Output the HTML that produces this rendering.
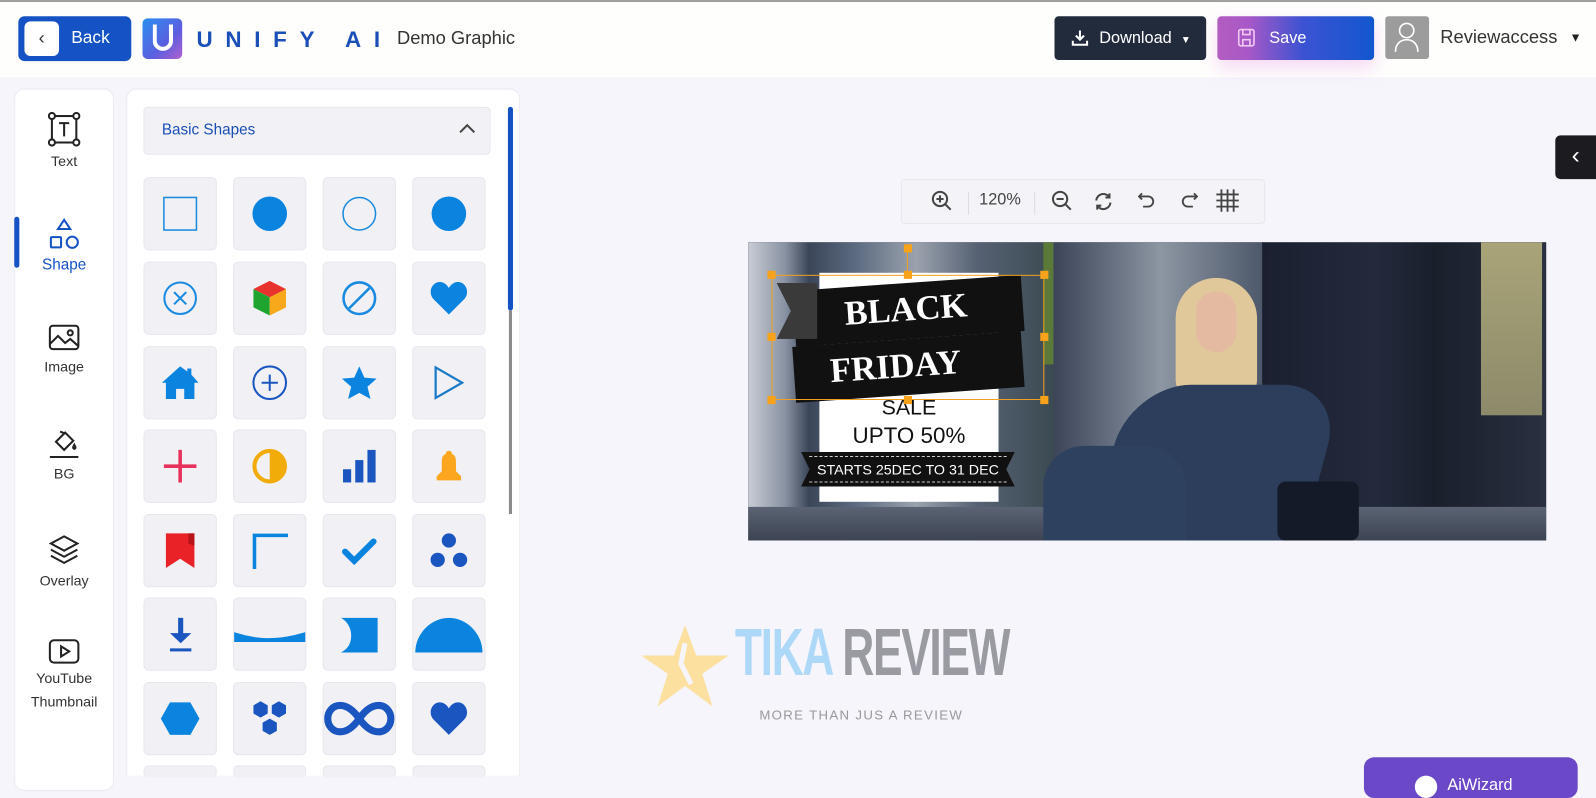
<!DOCTYPE html>
<html><head><meta charset="utf-8"><style>
*{box-sizing:border-box;margin:0;padding:0}
html,body{width:1596px;height:790px;overflow:hidden;background:#f5f5fb;font-family:"Liberation Sans",Arial,sans-serif}
#w{position:absolute;left:0;top:0;width:1568px;height:776px;transform:scale(1.01786);transform-origin:0 0}
.a{position:absolute}
.hdr{left:0;top:0;width:1568px;height:76px;background:#fefefc;border-top:2px solid #a0a0a0}
.cell{position:absolute;width:72px;height:72px;background:#f1f1f5;border:1px solid #e6e6ee;border-radius:5px;display:flex;align-items:center;justify-content:center}
.nav{position:absolute;left:0;width:98px;text-align:center;font-size:14px;color:#333}
.nav svg{display:block;margin:0 auto 6px}
</style></head><body><div id="w">
<div class="a hdr"></div>
<div class="a" style="left:18px;top:16px;width:111px;height:44px;background:#1552c4;border-radius:6px"></div>
<div class="a" style="left:24px;top:21px;width:34px;height:34px;background:#fff;border-radius:6px;font-size:18px;color:#333;text-align:center;line-height:32px">&#8249;</div>
<div class="a" style="left:70px;top:27px;color:#fff;font-size:17px">Back</div>
<div class="a" style="left:140px;top:18px;width:39px;height:40px;border-radius:5px;background:linear-gradient(135deg,#2a8ff0,#5b5ee0 60%,#b060d0)"></div>
<div class="a" style="left:150px;top:24px;width:20px;height:26px;border:4px solid #fff;border-top:none;border-radius:0 0 12px 12px"></div>
<div class="a" style="left:193px;top:26px;font-size:22px;letter-spacing:12.5px;color:#1a4fb8;font-weight:bold;white-space:nowrap">UNIFY AI</div>
<div class="a" style="left:390px;top:27px;font-size:18px;color:#333">Demo Graphic</div>
<div class="a" style="left:1036px;top:16px;width:149px;height:43px;background:#222b3c;border-radius:4px;color:#fff;font-size:16px;line-height:43px;padding-left:44px">Download&nbsp;&nbsp;<span style="font-size:10px">&#9660;</span></div>
<svg class="a" style="left:1052px;top:28px" width="18" height="18" viewBox="0 0 18 18" fill="none" stroke="#fff" stroke-width="2"><path d="M9 2v9M5 7l4 4 4-4M2 12v4h14v-4"/></svg>
<div class="a" style="left:1196px;top:16px;width:154px;height:43px;border-radius:4px;background:linear-gradient(90deg,#b35dc0,#a758c7 20%,#3b53d2 55%,#1257cf);box-shadow:0 8px 18px rgba(230,150,230,.35);color:#fff;font-size:16px;line-height:43px;padding-left:51px">Save</div>
<svg class="a" style="left:1216px;top:28px" width="17" height="18" viewBox="0 0 17 18" fill="none" stroke="#f0c8f0" stroke-width="1.6"><rect x="1" y="1" width="15" height="16" rx="2"/><path d="M5 1v5h7V1M5 17v-6h7v6"/></svg>
<div class="a" style="left:1361px;top:16px;width:43px;height:42px;background:#9c9c9c;border-radius:3px"></div>
<svg class="a" style="left:1368px;top:20px" width="28" height="32" viewBox="0 0 28 32" fill="none" stroke="#fff" stroke-width="1.6"><circle cx="14" cy="10" r="7"/><path d="M3 31c0-8 5-12 11-12s11 4 11 12"/></svg>
<div class="a" style="left:1415px;top:26px;font-size:18px;color:#333">Reviewaccess</div>
<div class="a" style="left:1542px;top:30px;font-size:12px;color:#222">&#9660;</div>
<div class="a" style="left:14px;top:87px;width:98px;height:690px;background:#fff;border:1px solid #ebebf2;border-radius:10px"></div>
<div class="a" style="left:14px;top:213px;width:5px;height:50px;background:#1552c4;border-radius:3px"></div>
<div class="nav" style="left:14px;top:110px"><svg width="32" height="34" viewBox="0 0 32 34" fill="none" stroke="#222" stroke-width="2"><rect x="4" y="4" width="24" height="26"/><circle cx="4" cy="4" r="3" fill="#fff"/><circle cx="28" cy="4" r="3" fill="#fff"/><circle cx="4" cy="30" r="3" fill="#fff"/><circle cx="28" cy="30" r="3" fill="#fff"/><path d="M11 11h10M16 11v13"/></svg>Text</div>
<div class="nav" style="left:14px;top:214px;color:#1552c4;font-size:15px"><svg width="32" height="32" viewBox="0 0 32 32" fill="none" stroke="#1552c4" stroke-width="2"><path d="M16 2l6 9H10z"/><rect x="3" y="19" width="10" height="10" rx="1"/><circle cx="24" cy="24" r="5.5"/></svg>Shape</div>
<div class="nav" style="left:14px;top:318px"><svg width="32" height="28" viewBox="0 0 32 28" fill="none" stroke="#222" stroke-width="2"><rect x="2" y="2" width="28" height="23" rx="3"/><path d="M2 20l8-8 7 7 5-4 8 7"/><circle cx="22" cy="9" r="2.5"/></svg>Image</div>
<div class="nav" style="left:14px;top:421px"><svg width="32" height="30" viewBox="0 0 32 30" fill="none" stroke="#222" stroke-width="2"><path d="M8 13l9-9 8 8-9 9z"/><path d="M12 3l5 2"/><path d="M26 16c-1 2-2 3 0 4 2-1 1-2 0-4z"/><path d="M2 28h28"/></svg>BG</div>
<div class="nav" style="left:14px;top:524px"><svg width="32" height="32" viewBox="0 0 32 32" fill="none" stroke="#222" stroke-width="2"><path d="M16 3l13 7-13 7-13-7z"/><path d="M3 16l13 7 13-7M3 22l13 7 13-7"/></svg>Overlay</div>
<div class="nav" style="left:14px;top:627px;line-height:23px"><svg width="32" height="26" viewBox="0 0 32 26" fill="none" stroke="#222" stroke-width="2" style="margin-bottom:2px"><rect x="2" y="2" width="28" height="22" rx="4"/><path d="M13 8v10l8-5z"/></svg>YouTube<br>Thumbnail</div>
<div class="a" style="left:124px;top:87px;width:387px;height:690px;background:#fff;border:1px solid #ebebf2;border-radius:10px"></div>
<div class="a" style="left:141px;top:105px;width:341px;height:47px;background:#f2f2f6;border:1px solid #e6e6ee;border-radius:4px"></div>
<div class="a" style="left:159px;top:119px;font-size:15px;color:#1a4fb8">Basic Shapes</div>
<svg class="a" style="left:451px;top:121px" width="16" height="10" viewBox="0 0 16 10" fill="none" stroke="#444" stroke-width="2"><path d="M1 9l7-7 7 7"/></svg>
<div class="a" style="left:499px;top:105px;width:5px;height:200px;background:#1552c4;border-radius:3px"></div>
<div class="a" style="left:500px;top:305px;width:3px;height:200px;background:#888"></div>
<div class="a" style="left:124px;top:762px;width:387px;height:15px;background:#f5f5fb"></div>

<div class="cell" style="left:141px;top:174px"><svg width="36" height="36"><rect x="2" y="2" width="32" height="32" fill="none" stroke="#1a8ae0" stroke-width="1.5"/></svg></div>
<div class="cell" style="left:229px;top:174px"><svg width="36" height="36"><circle cx="18" cy="18" r="17" fill="#0b84e0"/></svg></div>
<div class="cell" style="left:317px;top:174px"><svg width="36" height="36"><circle cx="18" cy="18" r="16" fill="none" stroke="#1a8ae0" stroke-width="1.5"/></svg></div>
<div class="cell" style="left:405px;top:174px"><svg width="36" height="36"><circle cx="18" cy="18" r="17" fill="#0b84e0"/></svg></div>

<div class="cell" style="left:141px;top:257px"><svg width="36" height="36" fill="none" stroke="#1a8ae0" stroke-width="2"><circle cx="18" cy="18" r="15.5"/><path d="M12 12l12 12M24 12L12 24"/></svg></div>
<div class="cell" style="left:229px;top:257px"><svg width="34" height="36" viewBox="0 0 34 36"><path d="M17 1l16 8-16 8L1 9z" fill="#e8322e"/><path d="M1 9l16 8v18L1 27z" fill="#1fa52f"/><path d="M33 9l-16 8v18l16-8z" fill="#f7a81b"/></svg></div>
<div class="cell" style="left:317px;top:257px"><svg width="36" height="36" fill="none" stroke="#1a8ae0" stroke-width="2.5"><circle cx="18" cy="18" r="15.5"/><path d="M8 28L28 8"/></svg></div>
<div class="cell" style="left:405px;top:257px"><svg width="38" height="34" viewBox="0 0 38 34"><path d="M19 33L4 18C-2 12 2 1 10 1c5 0 8 4 9 6 1-2 4-6 9-6 8 0 12 11 6 17z" fill="#0b84e0"/></svg></div>

<div class="cell" style="left:141px;top:340px"><svg width="38" height="34" viewBox="0 0 38 34" fill="#0b84e0"><path d="M19 1L1 17h4v16h10V23h8v10h10V17h4L30 9V3h-4v3z"/></svg></div>
<div class="cell" style="left:229px;top:340px"><svg width="36" height="36" fill="none" stroke="#1a55c0" stroke-width="2"><circle cx="18" cy="18" r="16"/><path d="M18 10v16M10 18h16"/></svg></div>
<div class="cell" style="left:317px;top:340px"><svg width="36" height="34" viewBox="0 0 36 34"><path d="M18 1l5 11 12 1-9 8 3 12-11-6-11 6 3-12-9-8 12-1z" fill="#0b84e0"/></svg></div>
<div class="cell" style="left:405px;top:340px"><svg width="32" height="34" viewBox="0 0 32 34" fill="none" stroke="#1a7ac8" stroke-width="2.2"><path d="M3 2v30l26-15z"/></svg></div>

<div class="cell" style="left:141px;top:422px"><svg width="36" height="36" stroke="#e8305c" stroke-width="3.5"><path d="M18 2v32M2 18h32"/></svg></div>
<div class="cell" style="left:229px;top:422px"><svg width="36" height="36"><circle cx="18" cy="18" r="15" fill="none" stroke="#f2ac0a" stroke-width="4"/><path d="M18 3a15 15 0 0 1 0 30z" fill="#f2ac0a"/></svg></div>
<div class="cell" style="left:317px;top:422px"><svg width="36" height="36" fill="#1a55c0"><rect x="2" y="21" width="8" height="13"/><rect x="14" y="12" width="8" height="22"/><rect x="26" y="2" width="8" height="32"/></svg></div>
<div class="cell" style="left:405px;top:422px"><svg width="28" height="34" viewBox="0 0 28 34" fill="#fba61e"><path d="M14 2c-2 0-3 1-3 3C7 6 7 10 7 16v6l-5 5v4h24v-4l-5-5v-6c0-6 0-10-4-11 0-2-1-3-3-3z"/></svg></div>

<div class="cell" style="left:141px;top:505px"><svg width="32" height="36" viewBox="0 0 32 36"><path d="M2 1h28v34L16 26 2 35z" fill="#e82226"/><path d="M24 1h6v12l-6-2z" fill="#b81418"/></svg></div>
<div class="cell" style="left:229px;top:505px"><svg width="36" height="36" fill="none" stroke="#0b84e0" stroke-width="3.5"><path d="M3 36V3h33"/></svg></div>
<div class="cell" style="left:317px;top:505px"><svg width="36" height="28" fill="none" stroke="#0b84e0" stroke-width="6" stroke-linecap="round"><path d="M4 15l9 9L32 5"/></svg></div>
<div class="cell" style="left:405px;top:505px"><svg width="38" height="36" fill="#1a55c0"><circle cx="19" cy="8" r="7"/><circle cx="8" cy="27" r="7"/><circle cx="30" cy="27" r="7"/></svg></div>

<div class="cell" style="left:141px;top:587px"><svg width="24" height="36" fill="#1a55c0"><rect x="10" y="2" width="5" height="18"/><path d="M2 17h21l-10.5 10z"/><rect x="2" y="32" width="21" height="3"/></svg></div>
<div class="cell" style="left:229px;top:587px"><svg width="72" height="20" viewBox="0 0 72 20"><path d="M0 8c25 8 45 8 72 0v10H0z" fill="#0b84e0"/></svg></div>
<div class="cell" style="left:317px;top:587px"><svg width="40" height="36" viewBox="0 0 40 36"><path d="M2 2h36v34H2c8-4 10-10 10-17S8 5 2 2z" fill="#0b84e0"/></svg></div>
<div class="cell" style="left:405px;top:587px"><svg width="70" height="36" viewBox="0 0 70 36"><path d="M2 36C2 18 17 2 35 2s33 16 33 34z" fill="#0b84e0"/></svg></div>

<div class="cell" style="left:141px;top:670px"><svg width="40" height="36" viewBox="0 0 40 36"><path d="M10 2h20l9 16-9 16H10L1 18z" fill="#0b84e0"/></svg></div>
<div class="cell" style="left:229px;top:670px"><svg width="36" height="36" viewBox="0 0 36 36" fill="#1a55c0"><path d="M9 1l7 4v8l-7 4-7-4V5z"/><path d="M27 1l7 4v8l-7 4-7-4V5z"/><path d="M18 18l7 4v8l-7 4-7-4v-8z"/></svg></div>
<div class="cell" style="left:317px;top:670px"><svg width="70" height="36" viewBox="0 0 70 36" fill="none" stroke="#1a55c0" stroke-width="7"><path d="M35 18C28 8 22 5 16 5 9 5 4 11 4 18s5 13 12 13c6 0 12-3 19-13 7-10 13-13 19-13 7 0 12 6 12 13s-5 13-12 13c-6 0-12-3-19-13z"/></svg></div>
<div class="cell" style="left:405px;top:670px"><svg width="38" height="34" viewBox="0 0 38 34"><path d="M19 33L4 18C-2 12 2 1 10 1c5 0 8 4 9 6 1-2 4-6 9-6 8 0 12 11 6 17z" fill="#1a55c0"/></svg></div>

<div class="cell" style="left:141px;top:752px;height:12px;border-bottom:none"></div>
<div class="cell" style="left:229px;top:752px;height:12px;border-bottom:none"></div>
<div class="cell" style="left:317px;top:752px;height:12px;border-bottom:none"></div>
<div class="cell" style="left:405px;top:752px;height:12px;border-bottom:none"></div>

<div class="a" style="left:885px;top:176px;width:358px;height:44px;background:#f3f3f8;border:1px solid #e6e6ee;border-radius:4px"></div>
<svg class="a" style="left:915px;top:187px" width="20" height="20" fill="none" stroke="#444" stroke-width="2"><circle cx="8.5" cy="8.5" r="7"/><path d="M14 14l5 5M8.5 5v7M5 8.5h7"/></svg>
<div class="a" style="left:951px;top:189px;width:1px;height:22px;background:#ddd"></div>
<div class="a" style="left:962px;top:188px;font-size:16px;color:#444">120%</div>
<div class="a" style="left:1016px;top:189px;width:1px;height:22px;background:#ddd"></div>
<svg class="a" style="left:1033px;top:187px" width="20" height="20" fill="none" stroke="#444" stroke-width="2"><circle cx="8.5" cy="8.5" r="7"/><path d="M14 14l5 5M5 8.5h7"/></svg>
<svg class="a" style="left:1074px;top:188px" width="20" height="20" fill="none" stroke="#444" stroke-width="2"><path d="M3 9a7 7 0 0 1 13-3M17 11a7 7 0 0 1-13 3M16 2v4h-4M4 18v-4h4"/></svg>
<svg class="a" style="left:1118px;top:188px" width="18" height="18" fill="none" stroke="#444" stroke-width="1.8"><path d="M4 2L1 5l3 3M1 5h9a5 5 0 0 1 0 10H5"/></svg>
<svg class="a" style="left:1159px;top:188px" width="18" height="18" fill="none" stroke="#444" stroke-width="1.8"><path d="M14 2l3 3-3 3M17 5H8a5 5 0 0 0 0 10h5"/></svg>
<svg class="a" style="left:1194px;top:185px" width="24" height="24" fill="none" stroke="#444" stroke-width="1.8"><path d="M6 1v22M12 1v22M18 1v22M1 6h22M1 12h22M1 18h22"/></svg>

<div class="a" style="left:1528px;top:133px;width:40px;height:43px;background:#1c1c20;border-radius:5px 0 0 5px;color:#fff;font-size:24px;text-align:center;line-height:40px">&#8249;</div>

<div class="a" style="left:735px;top:238px;width:784px;height:293px;overflow:hidden;background:#2a3144">
 <div class="a" style="left:0;top:0;width:300px;height:293px;background:linear-gradient(90deg,#c8ccd4 0,#8a93a3 12%,#3a4558 20%,#5b6a80 35%,#9aa2ad 55%,#566173 75%,#3b4a52)"></div>
 <div class="a" style="left:290px;top:0;width:20px;height:120px;background:#5b7a3a"></div>
 <div class="a" style="left:300px;top:0;width:210px;height:293px;background:linear-gradient(90deg,#3c4558,#6a7484 30%,#8d96a2 50%,#4a5568)"></div>
 <div class="a" style="left:505px;top:0;width:280px;height:293px;background:linear-gradient(90deg,#1b2030,#232a3c 40%,#1a1f2c 60%,#2a3040)"></div>
 <div class="a" style="left:720px;top:0;width:60px;height:170px;background:linear-gradient(180deg,#a9a478,#8c8a6a)"></div>
 <div class="a" style="left:0;top:260px;width:784px;height:33px;background:linear-gradient(180deg,#5b6474,#3c4352)"></div>
 <div class="a" style="left:420px;top:35px;width:80px;height:120px;background:#e0c89a;border-radius:40px 40px 20px 20px"></div>
 <div class="a" style="left:440px;top:48px;width:40px;height:60px;background:#e4bba0;border-radius:20px"></div>
 <div class="a" style="left:355px;top:140px;width:210px;height:153px;background:#2c3e5c;border-radius:60px 60px 0 0;transform:skewX(-15deg)"></div>
 <div class="a" style="left:290px;top:200px;width:140px;height:93px;background:#2e4260;border-radius:40px 40px 0 0"></div>
 <div class="a" style="left:520px;top:235px;width:80px;height:58px;background:#141a28;border-radius:8px"></div>
 <div class="a" style="left:70px;top:30px;width:176px;height:225px;background:#fff"></div>
 <div class="a" style="left:45px;top:40px;width:225px;height:55px;background:#111;transform:rotate(-4deg)"></div>
 <div class="a" style="left:45px;top:95px;width:225px;height:55px;background:#111;transform:rotate(-4deg)"></div>
 <div class="a" style="left:28px;top:40px;width:40px;height:55px;background:#3a3a3a;clip-path:polygon(0 0,100% 0,100% 100%,0 100%,35% 50%)"></div>
 <div class="a" style="left:0;top:48px;width:310px;text-align:center;font-family:'Liberation Serif',serif;font-weight:bold;font-size:34px;color:#fff;transform:rotate(-4deg)">BLACK</div>
 <div class="a" style="left:-10px;top:104px;width:310px;text-align:center;font-family:'Liberation Serif',serif;font-weight:bold;font-size:34px;color:#fff;transform:rotate(-4deg)">FRIDAY</div>
 <div class="a" style="left:70px;top:151px;width:176px;text-align:center;font-size:21px;color:#111">SALE</div>
 <div class="a" style="left:70px;top:177px;width:176px;text-align:center;font-size:22px;color:#111">UPTO 50%</div>
 <div class="a" style="left:52px;top:206px;width:210px;height:34px;background:#111;clip-path:polygon(0 0,100% 0,96% 50%,100% 100%,0 100%,4% 50%)"></div>
 <div class="a" style="left:60px;top:210px;width:194px;height:26px;border-top:1px dashed #ccc;border-bottom:1px dashed #ccc"></div>
 <div class="a" style="left:52px;top:215px;width:210px;text-align:center;font-size:14px;color:#fff">STARTS 25DEC TO 31 DEC</div>
 <div class="a" style="left:23px;top:32px;width:268px;height:123px;border:1px solid #f0a020"></div>
 <div class="a" style="left:156px;top:6px;width:1px;height:26px;background:#f0a020"></div>
 <div class="a" style="left:153px;top:2px;width:8px;height:8px;background:#f7a21b"></div>
 <div class="a" style="left:19px;top:28px;width:8px;height:8px;background:#f7a21b"></div>
 <div class="a" style="left:153px;top:28px;width:8px;height:8px;background:#f7a21b"></div>
 <div class="a" style="left:287px;top:28px;width:8px;height:8px;background:#f7a21b"></div>
 <div class="a" style="left:19px;top:89px;width:8px;height:8px;background:#f7a21b"></div>
 <div class="a" style="left:287px;top:89px;width:8px;height:8px;background:#f7a21b"></div>
 <div class="a" style="left:19px;top:151px;width:8px;height:8px;background:#f7a21b"></div>
 <div class="a" style="left:153px;top:151px;width:8px;height:8px;background:#f7a21b"></div>
 <div class="a" style="left:287px;top:151px;width:8px;height:8px;background:#f7a21b"></div>
</div>

<svg class="a" style="left:628px;top:612px" width="90" height="84" viewBox="0 0 90 84"><path d="M45 2l11 30h32L62 50l10 32-27-20-27 20 10-32L2 32h32z" fill="#fbe0a0"/><path d="M45 20l-4 20 10 20" fill="none" stroke="#f5f5fb" stroke-width="5"/></svg>
<div class="a" style="left:722px;top:602px;font-size:66px;font-weight:bold;letter-spacing:-2px;transform:scaleX(.66);transform-origin:0 0;color:#aed8f8;white-space:nowrap">TIKA <span style="color:#9a9aa2">REVIEW</span></div>
<div class="a" style="left:746px;top:695px;font-size:13px;letter-spacing:1.3px;color:#999">MORE THAN JUS A REVIEW</div>

<div class="a" style="left:1340px;top:744px;width:210px;height:40px;background:#6b48c8;border-radius:10px;color:#fff;font-size:16px;padding:19px 0 0 82px">AiWizard</div>
<div class="a" style="left:1390px;top:762px;width:22px;height:22px;border-radius:50%;background:#fff"></div>
</div></body></html>
